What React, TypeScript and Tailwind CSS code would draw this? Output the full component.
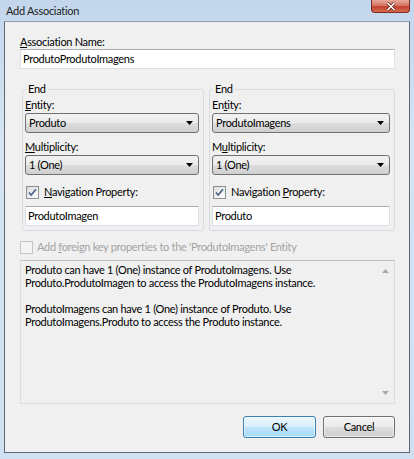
import React from "react";

const FONT = "font-['Lato','Noto_Sans',sans-serif]";

const Combo = ({ value }: { value: string }) => (
  <div className="flex h-[20px] items-center justify-between rounded-[3px] border border-[#707070] bg-[linear-gradient(to_bottom,#f2f2f2_0%,#ebebeb_50%,#dddddd_51%,#cfcfcf_100%)] pl-[3px] pr-[5px]">
    <span className="leading-[14px]">{value}</span>
    <svg width="7" height="4" viewBox="0 0 7 4">
      <path d="M0 0h7L3.5 4z" fill="#000" />
    </svg>
  </div>
);

const TextBox = ({ value }: { value: string }) => (
  <div className="flex h-[20px] items-center border border-[#dbdfe6] border-t-[#abadb3] bg-white pl-[2px] leading-[14px]">
    {value}
  </div>
);

const CheckBox = ({ checked, disabled }: { checked?: boolean; disabled?: boolean }) => (
  <span
    className={`flex h-[13px] w-[13px] shrink-0 items-center justify-center border ${
      disabled
        ? "border-[#c5c5c5] bg-[#f4f4f4]"
        : "border-[#8e8f8f] bg-[linear-gradient(135deg,#dcdcdc,#ffffff)]"
    }`}
  >
    {checked && (
      <svg width="9" height="9" viewBox="0 0 9 9">
        <path d="M1 4.5l2.2 2.6L8 1.2" fill="none" stroke="#4a5f8c" strokeWidth="1.6" />
      </svg>
    )}
  </span>
);

const EndGroup = ({
  width,
  entity,
  entityLabel,
  multLabel,
  navLabel,
  nav,
}: {
  width: string;
  entity: string;
  entityLabel: React.ReactNode;
  multLabel: React.ReactNode;
  navLabel: React.ReactNode;
  nav: string;
}) => (
  <fieldset className={`${width} rounded-[3px] border border-[#d5dbe1] pb-[4px] pl-[2px] pr-[4px] pt-[2px]`}>
    <legend className="ml-[1px] px-[2px] leading-[14px]">End</legend>
    <div className="leading-[14px]">{entityLabel}</div>
    <div className="mt-[1px]">
      <Combo value={entity} />
    </div>
    <div className="mt-[7px] leading-[14px]">{multLabel}</div>
    <div className="mt-[1px]">
      <Combo value="1 (One)" />
    </div>
    <div className="mt-[10px] flex h-[14px] items-center gap-[5px] pl-[1px]">
      <CheckBox checked />
      <span className="leading-[14px]">{navLabel}</span>
    </div>
    <div className="mt-[7px]">
      <TextBox value={nav} />
    </div>
  </fieldset>
);

export default function App() {
  return (
    <div
      className={`relative flex h-[459px] w-[414px] flex-col bg-[linear-gradient(to_bottom,#c3d6ec,#d6e4f3_30%,#cfe0f2)] text-[11px] tracking-[-0.3px] text-black ${FONT}`}
    >
      {/* title bar */}
      <div className="flex h-[21px] items-center pl-[6px] text-[11px] leading-[14px] text-[#1e1e1e]">
        Add Association
      </div>
      <div className="absolute right-[4px] top-0 flex h-[13px] w-[39px] items-center justify-center rounded-b-[4px] border border-t-0 border-[#7a2c22] bg-[linear-gradient(to_bottom,#e9a99b,#d3705f_50%,#c1412f_55%,#d86b4e)]">
        <svg width="10" height="9" viewBox="0 0 10 9">
          <path d="M1.5 1l7 7M8.5 1l-7 7" stroke="#5a1d15" strokeWidth="3" />
          <path d="M1.5 1l7 7M8.5 1l-7 7" stroke="#fff" strokeWidth="1.6" />
        </svg>
      </div>

      {/* client area */}
      <div className="ml-[4px] flex h-[432px] w-[406px] flex-col border border-[#5d6874] border-t-[#8d9aa8] bg-[#f0f0f0] pl-[15px] pt-[13px]">
        <div className="leading-[14px]">
          <u>A</u>ssociation Name:
        </div>
        <div className="w-[375px]">
          <TextBox value="ProdutoProdutoImagens" />
        </div>

        <div className="ml-[2px] mt-[13px] flex gap-[5px]">
          <EndGroup
            width="w-[182px]"
            entity="Produto"
            entityLabel={
              <>
                <u>E</u>ntity:
              </>
            }
            multLabel={
              <>
                <u>M</u>ultiplicity:
              </>
            }
            navLabel={
              <>
                <u>N</u>avigation Property:
              </>
            }
            nav="ProdutoImagen"
          />
          <EndGroup
            width="w-[186px]"
            entity="ProdutoImagens"
            entityLabel={
              <>
                En<u>t</u>ity:
              </>
            }
            multLabel={
              <>
                M<u>u</u>ltiplicity:
              </>
            }
            navLabel={
              <>
                Navigation <u>P</u>roperty:
              </>
            }
            nav="Produto"
          />
        </div>

        <div className="mt-[9px] flex h-[14px] items-center gap-[4px]">
          <CheckBox disabled />
          <span className="leading-[14px] text-[#a3a3a3]">
            Add <u>f</u>oreign key properties to the 'ProdutoImagens' Entity
          </span>
        </div>

        <div className="mt-[6px] flex h-[144px] w-[375px] border border-[#dcdcdc] border-t-[#bfbfbf]">
          <div className="flex-1 pl-[4px] pt-[2px] leading-[13px]">
            <p>Produto can have 1 (One) instance of ProdutoImagens. Use</p>
            <p>Produto.ProdutoImagen to access the ProdutoImagens instance.</p>
            <p className="h-[13px]" />
            <p>ProdutoImagens can have 1 (One) instance of Produto. Use</p>
            <p>ProdutoImagens.Produto to access the Produto instance.</p>
          </div>
          <div className="flex w-[17px] flex-col items-center justify-between py-[8px]">
            <svg width="7" height="4" viewBox="0 0 7 4">
              <path d="M0 4h7L3.5 0z" fill="#a8a8a8" />
            </svg>
            <svg width="7" height="4" viewBox="0 0 7 4">
              <path d="M0 0h7L3.5 4z" fill="#a8a8a8" />
            </svg>
          </div>
        </div>

        <div className="mt-[12px] flex w-[375px] justify-end gap-[7px]">
          <button className="h-[22px] w-[73px] rounded-[3px] border border-[#3c7fb1] bg-[linear-gradient(to_bottom,#eaf6fd_0%,#d9f0fc_50%,#bee6fd_51%,#a7d9f5_100%)] leading-[14px] shadow-[inset_0_0_0_1px_rgba(255,255,255,0.6)]">
            OK
          </button>
          <button className="h-[22px] w-[72px] rounded-[3px] border border-[#707070] bg-[linear-gradient(to_bottom,#f2f2f2_0%,#ebebeb_50%,#dddddd_51%,#cfcfcf_100%)] leading-[14px] shadow-[inset_0_0_0_1px_rgba(255,255,255,0.6)]">
            Cancel
          </button>
        </div>
      </div>
    </div>
  );
}
